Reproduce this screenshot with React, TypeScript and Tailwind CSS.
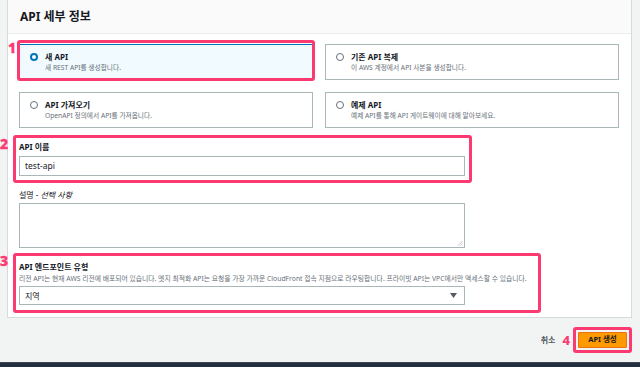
import type { ReactElement, ReactNode } from "react";

const PINK = "border-[#fc3a72]";

function Mark({ n, className }: { n: string; className: string }): ReactElement {
  return (
    <span
      className={`absolute font-extrabold text-[14px] leading-none text-[#fc3a72] [-webkit-text-stroke:0.4px_#fc3a72] ${className}`}
    >
      {n}
    </span>
  );
}

function Card({
  title,
  desc,
  selected,
  children,
}: {
  title: string;
  desc: string;
  selected?: boolean;
  children?: ReactNode;
}): ReactElement {
  return (
    <div
      className={[
        "relative flex h-[36px] items-start gap-[7px] border px-[10px] pt-[7px]",
        selected ? "border-[#0073bb] bg-[#f1faff]" : "border-[#aab7b8] bg-white",
      ].join(" ")}
    >
      {selected ? (
        <span className="mt-[1px] h-[8px] w-[8px] shrink-0 rounded-full border-[2.5px] border-[#0073bb] bg-white" />
      ) : (
        <span className="mt-[1px] h-[8px] w-[8px] shrink-0 rounded-full border border-[#687078] bg-white" />
      )}
      <div className="flex flex-col">
        <span className="text-[8px] font-bold leading-[10px] text-[#16191f]">{title}</span>
        <span className="mt-[2px] text-[6.7px] leading-[8px] text-[#687078]">{desc}</span>
      </div>
      {children}
    </div>
  );
}

export default function App(): ReactElement {
  return (
    <div
      className="flex h-[367px] w-[640px] flex-col overflow-hidden bg-[#f2f3f3] text-[#16191f]"
      style={{ fontFamily: '"Noto Sans", "Noto Sans CJK KR", sans-serif' }}
    >
      <div className="flex">
        <div className="ml-[7px] w-[625px] border-x border-b border-[#d5dbdb] bg-white">
          <div className="flex h-[34px] items-center border-b border-[#eaeded] bg-[#fafafa] px-[12px]">
            <span className="text-[12px] font-bold">API 세부 정보</span>
          </div>

          <div className="pb-[12px] pl-[11px] pr-[12px] pt-[10px]">
            <div className="grid grid-cols-2 gap-x-[12px] gap-y-[12px]">
              <Card title="새 API" desc="새 REST API를 생성합니다." selected>
                <span className={`pointer-events-none absolute -bottom-[2px] -left-[3px] -right-[3px] -top-[5px] rounded-[3px] border-[3px] ${PINK}`} />
                <Mark n="1" className="-left-[12px] -top-[4px]" />
              </Card>
              <Card title="기존 API 복제" desc="이 AWS 계정에서 API 사본을 생성합니다." />
              <Card title="API 가져오기" desc="OpenAPI 정의에서 API를 가져옵니다." />
              <Card title="예제 API" desc="예제 API를 통해 API 게이트웨이에 대해 알아보세요." />
            </div>

            <div className="relative mt-[14px] w-[446px]">
              <span className={`pointer-events-none absolute -bottom-[7px] -left-[6px] -right-[7px] -top-[7px] rounded-[3px] border-[3px] ${PINK}`} />
              <Mark n="2" className="-left-[19px] -top-[5px]" />
              <div className="h-[10px] text-[8px] font-bold leading-[10px]">API 이름</div>
              <div className="mt-[4px] flex h-[20px] items-center border border-[#aab7b8] px-[5px] text-[8.5px]">
                test-api
              </div>
            </div>

            <div className="mt-[14px] w-[446px]">
              <div className="h-[10px] text-[8px] leading-[10px] text-[#16191f]">
                설명 - <i>선택 사항</i>
              </div>
              <div className="relative mt-[3px] h-[45px] border border-[#aab7b8]">
                <svg className="absolute bottom-[1px] right-[1px]" width="6" height="6" viewBox="0 0 6 6">
                  <path d="M1 5.5L5.5 1M3.5 5.5L5.5 3.5" stroke="#aab7b8" strokeWidth="0.8" />
                </svg>
              </div>
            </div>

            <div className="relative mt-[14px]">
              <span className={`pointer-events-none absolute -bottom-[8px] -left-[6px] -top-[9px] w-[528px] rounded-[3px] border-[3px] ${PINK}`} />
              <Mark n="3" className="-left-[19px] -top-[8px]" />
              <div className="h-[10px] text-[8px] font-bold leading-[10px]">API 엔드포인트 유형</div>
              <div className="mt-[2px] h-[9px] whitespace-nowrap text-[6.8px] leading-[9px] text-[#687078]">
                리전 API는 현재 AWS 리전에 배포되어 있습니다. 엣지 최적화 API는 요청을 가장 가까운 CloudFront 접속 지점으로 라우팅합니다. 프라이빗 API는 VPC에서만 액세스할 수 있습니다.
              </div>
              <div className="mt-[3px] flex h-[19px] w-[446px] items-center justify-between border border-[#aab7b8] pl-[5px] pr-[7px] text-[8px]">
                <span>지역</span>
                <svg width="7" height="5" viewBox="0 0 7 5">
                  <path d="M0 0H7L3.5 5Z" fill="#545b64" />
                </svg>
              </div>
            </div>
          </div>
        </div>
      </div>

      <div className="flex flex-1 items-center justify-end pr-[8px]">
        <span className="text-[8px] font-bold text-[#545b64]">취소</span>
        <span className="ml-[7px] text-[13px] font-extrabold leading-none text-[#fc3a72]">4</span>
        <div className={`relative ml-[3px] rounded-[3px] border-[3px] ${PINK} p-[2px]`}>
          <div className="flex h-[16px] w-[49px] items-center justify-center rounded-[1px] border border-[#ec7211] bg-[#ff9900] text-[7.5px] font-bold text-[#16191f]">
            API 생성
          </div>
        </div>
      </div>

      <div className="h-[5px] border-t border-[#3c4552] bg-[#232f3e]" />
    </div>
  );
}
